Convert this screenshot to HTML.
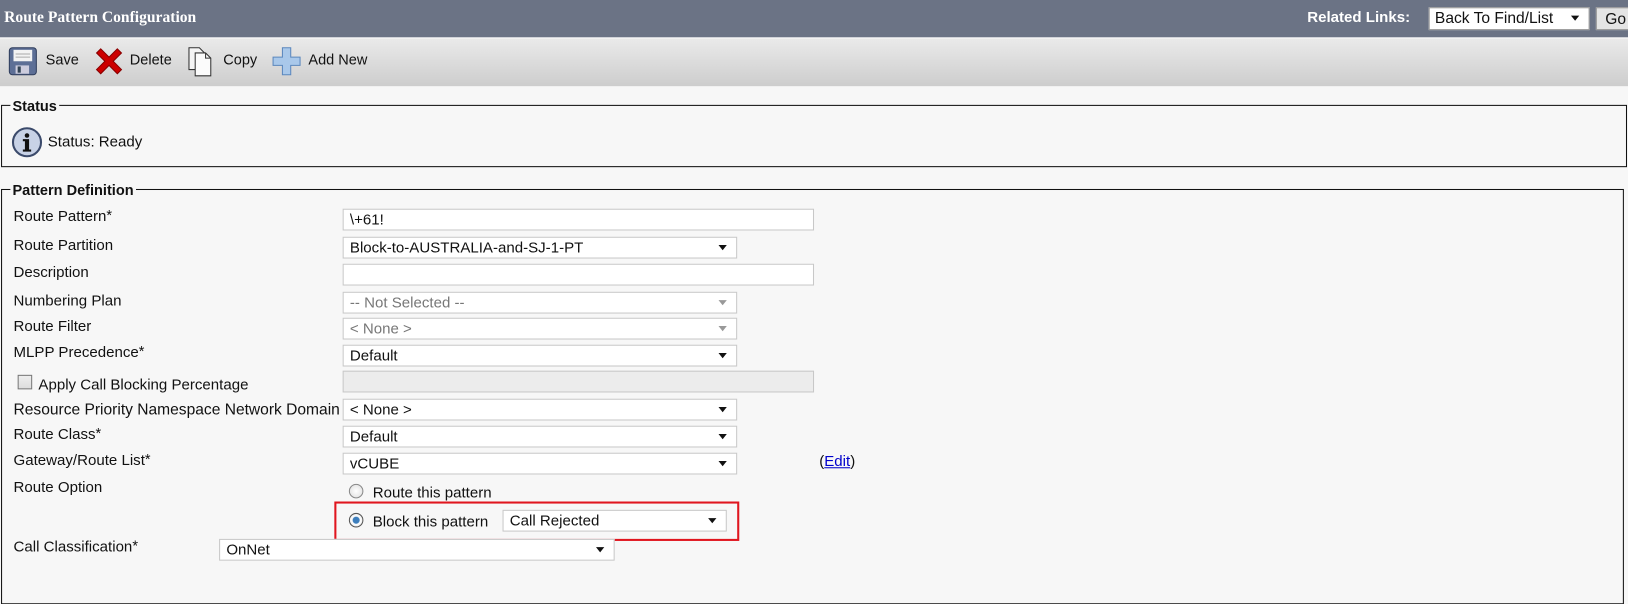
<!DOCTYPE html>
<html><head><meta charset="utf-8"><style>
*{box-sizing:border-box}
body{margin:0;width:1628px;height:566px;overflow:hidden;background:#f7f7f7;font-family:"Liberation Sans",Arial,sans-serif;font-size:14px;color:#111;position:relative}
#w{position:absolute;left:0;top:0;width:1568px;height:546px;transform:scale(1.0383);transform-origin:0 0}
.a{position:absolute;white-space:nowrap}
.lbl{position:absolute;white-space:nowrap;font-size:14.5px;transform-origin:left center}
.fld{position:absolute;background:#fff;border:1px solid #c8c8c8;height:21px;font-size:14.5px;padding:2px 6px 0;line-height:17px}
.sel:after{content:"";position:absolute;right:9px;top:7px;border-left:4px solid transparent;border-right:4px solid transparent;border-top:5px solid #111}
.dis{color:#777}
.dis:after{border-top-color:#999}
.st{font-size:14px;vertical-align:top;position:relative;top:-2px}
</style></head><body><div id="w">
<div class="a" style="left:0;top:0;width:1568px;height:36px;background:#6b7385"></div>
<div class="a" style="left:4px;top:9px;color:#fff;font-weight:bold;font-family:'Liberation Serif',serif;font-size:15px">Route Pattern Configuration</div>
<div class="a" style="left:1259px;top:9px;color:#fff;font-weight:bold;font-size:14.5px">Related Links:</div>
<div class="a sel fld" style="left:1376px;top:7px;width:155px;height:22px;border-color:#999;color:#111;padding:1px 5px;font-size:15px">Back To Find/List</div>
<div class="a" style="left:1537px;top:7px;width:40px;height:22px;background:#e4e4e4;border:1px solid #999;padding:2px 8px;font-size:15px">Go</div>
<div class="a" style="left:0;top:36px;width:1568px;height:47px;background:linear-gradient(#eaeaea,#cdcdcd);border-top:1px solid #fafafa"></div>
<svg class="a" style="left:8px;top:45px" width="28" height="28" viewBox="0 0 28 28"><rect x="1" y="1" width="26" height="26" rx="3" fill="#5d6f96" stroke="#2f3d5c"/><rect x="5" y="3" width="18" height="11" fill="#f3f3f3"/><line x1="7" y1="7" x2="21" y2="7" stroke="#aaa"/><line x1="7" y1="10" x2="21" y2="10" stroke="#aaa"/><rect x="7" y="18" width="13" height="8" fill="#ccd"/><rect x="9" y="19" width="3" height="6" fill="#345"/></svg>
<div class="a" style="left:44px;top:49px">Save</div>
<svg class="a" style="left:90px;top:44px" width="30" height="30" viewBox="0 0 30 30"><path d="M3 7 L7 3 L15 11 L23 3 L27 7 L19 15 L27 23 L23 27 L15 19 L7 27 L3 23 L11 15Z" fill="#c00" stroke="#800"/></svg>
<div class="a" style="left:125px;top:49px">Delete</div>
<svg class="a" style="left:180px;top:44px" width="26" height="30" viewBox="0 0 26 30"><path d="M2 2h10l5 5v16H2z" fill="#f4f4f4" stroke="#333"/><path d="M8 7h10l5 5v17H8z" fill="#fbfbfb" stroke="#333"/><path d="M18 7v5h5" fill="none" stroke="#333"/></svg>
<div class="a" style="left:215px;top:49px">Copy</div>
<svg class="a" style="left:262px;top:45px" width="28" height="28" viewBox="0 0 28 28"><path d="M10 1h8v9h9v8h-9v9h-8v-9H1v-8h9z" fill="#a9c8ea" stroke="#5b87bd"/></svg>
<div class="a" style="left:297px;top:49px">Add New</div>

<div class="a" style="left:1px;top:101px;width:1566px;height:60px;border:1px solid #111"></div>
<div class="a" style="left:10px;top:94px;background:#f7f7f7;font-weight:bold;padding:0 2px">Status</div>
<svg class="a" style="left:11px;top:122px" width="30" height="30" viewBox="0 0 30 30"><circle cx="15" cy="15" r="13.5" fill="#c8d2e6" stroke="#3b4a6b" stroke-width="2"/><circle cx="15" cy="8.5" r="2.2" fill="#111"/><path d="M11 12h6v10h2v2h-8v-2h2v-8h-2z" fill="#111"/></svg>
<div class="a" style="left:46px;top:129px;font-size:14.5px">Status: Ready</div>

<div class="a" style="left:1px;top:182px;width:1563px;height:400px;border:1px solid #111"></div>
<div class="a" style="left:10px;top:175px;background:#f7f7f7;font-weight:bold;padding:0 2px">Pattern Definition</div>

<div class="lbl" style="left:13px;top:201px">Route Pattern<span class="st">*</span></div>
<div class="fld" style="left:330px;top:201px;width:454px">\+61!</div>
<div class="lbl" style="left:13px;top:229px">Route Partition</div>
<div class="fld sel" style="left:330px;top:228px;width:380px">Block-to-AUSTRALIA-and-SJ-1-PT</div>
<div class="lbl" style="left:13px;top:255px">Description</div>
<div class="fld" style="left:330px;top:254px;width:454px"></div>
<div class="lbl" style="left:13px;top:282px">Numbering Plan</div>
<div class="fld sel dis" style="left:330px;top:281px;width:380px">-- Not Selected --</div>
<div class="lbl" style="left:13px;top:307px">Route Filter</div>
<div class="fld sel dis" style="left:330px;top:306px;width:380px">&lt; None &gt;</div>
<div class="lbl" style="left:13px;top:332px">MLPP Precedence<span class="st">*</span></div>
<div class="fld sel" style="left:330px;top:332px;width:380px">Default</div>
<div class="a" style="left:17px;top:361px;width:14px;height:14px;border:1px solid #777;background:linear-gradient(#eee,#ddd)"></div>
<div class="lbl" style="left:37px;top:363px">Apply Call Blocking Percentage</div>
<div class="fld" style="left:330px;top:357px;width:454px;background:#ececec"></div>
<div class="lbl" style="left:13px;top:386px;font-size:15px">Resource Priority Namespace Network Domain</div>
<div class="fld sel" style="left:330px;top:384px;width:380px">&lt; None &gt;</div>
<div class="lbl" style="left:13px;top:411px">Route Class<span class="st">*</span></div>
<div class="fld sel" style="left:330px;top:410px;width:380px">Default</div>
<div class="lbl" style="left:13px;top:436px">Gateway/Route List<span class="st">*</span></div>
<div class="fld sel" style="left:330px;top:436px;width:380px">vCUBE</div>
<div class="a" style="left:789px;top:437px;font-size:14.5px">(<span style="color:#00c;text-decoration:underline">Edit</span>)</div>
<div class="lbl" style="left:13px;top:462px">Route Option</div>
<div class="a" style="left:336px;top:466px;width:14px;height:14px;border-radius:50%;border:1px solid #888;background:radial-gradient(#fff,#ddd)"></div>
<div class="lbl" style="left:359px;top:467px">Route this pattern</div>
<div class="a" style="left:322px;top:483px;width:390px;height:38px;border:2px solid #e0161f"></div>
<div class="a" style="left:336px;top:494px;width:14px;height:14px;border-radius:50%;border:1px solid #555;background:radial-gradient(#3d7ebc 35%,#fff 45%,#ddd)"></div>
<div class="lbl" style="left:359px;top:495px">Block this pattern</div>
<div class="fld sel" style="left:484px;top:491px;width:216px">Call Rejected</div>
<div class="lbl" style="left:13px;top:519px">Call Classification<span class="st">*</span></div>
<div class="fld sel" style="left:211px;top:519px;width:381px">OnNet</div>
</div></body></html>
